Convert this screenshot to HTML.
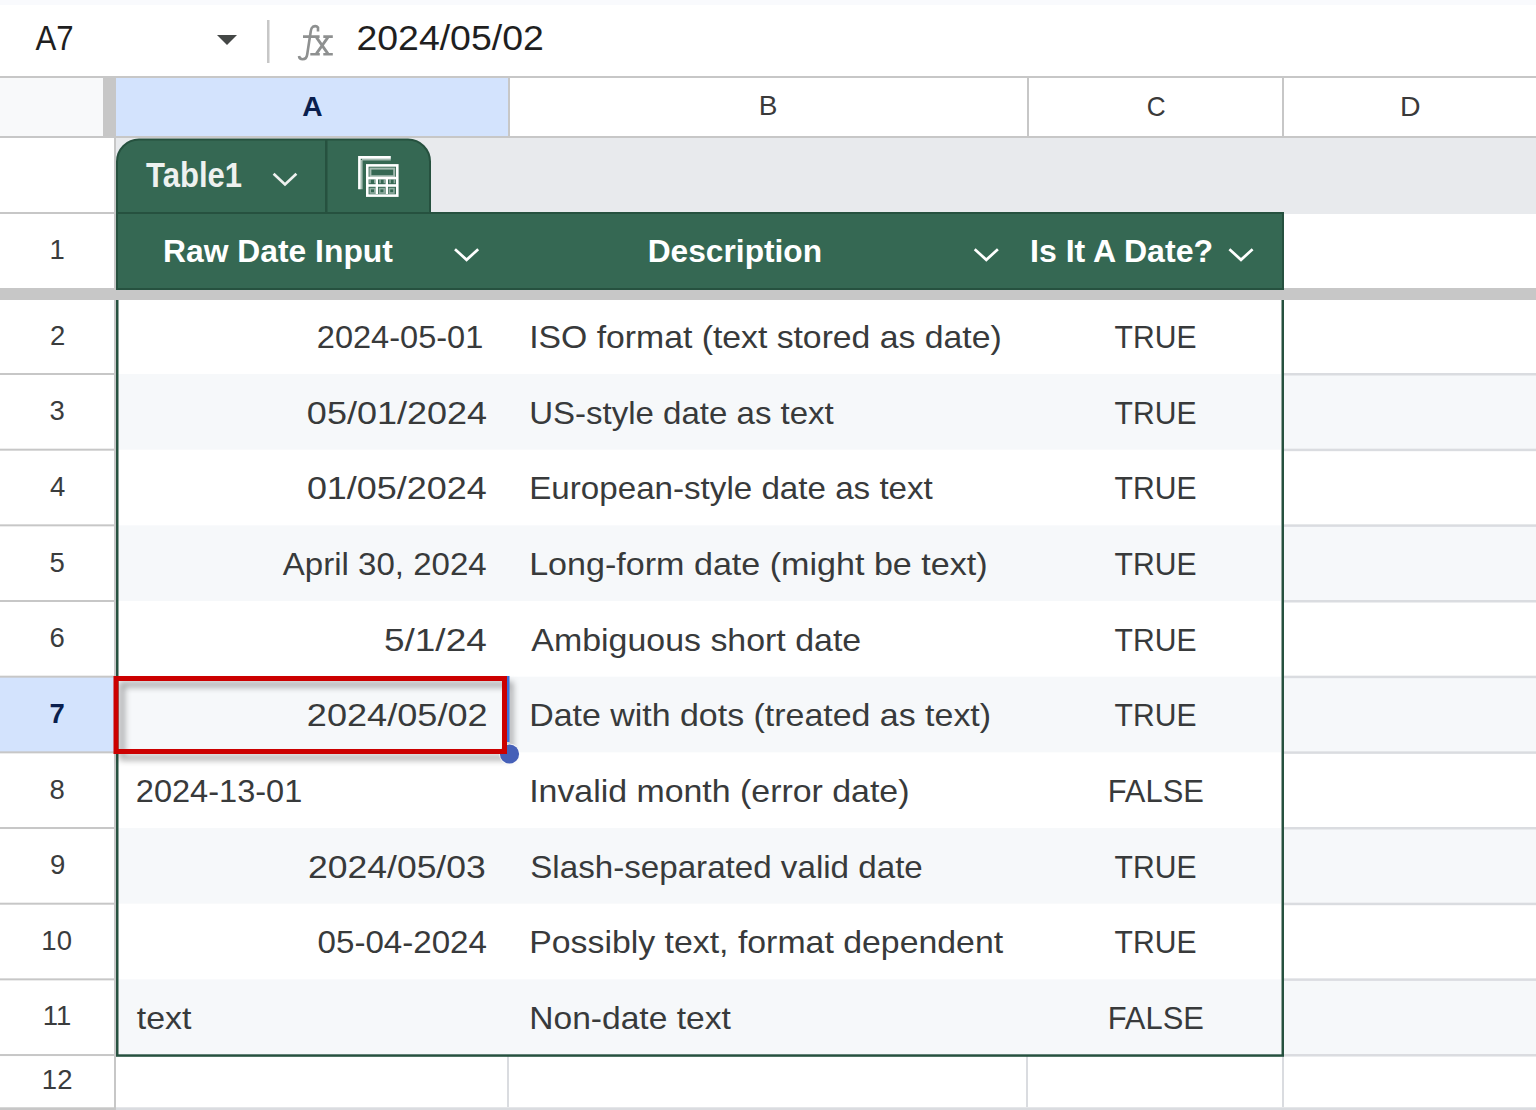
<!DOCTYPE html>
<html><head><meta charset="utf-8"><style>
html,body{margin:0;padding:0;background:#fff;width:1536px;height:1110px;overflow:hidden}
svg{display:block;font-family:"Liberation Sans",sans-serif}
</style></head><body>
<svg width="1536" height="1110" viewBox="0 0 1536 1110">
<rect x="0" y="0" width="1536" height="5" fill="#f9fafd" />
<rect x="0" y="76" width="1536" height="2" fill="#c7c7c7" />
<path d="M217 35 L237 35 L227 45 Z" fill="#444746"/>
<rect x="267" y="20" width="2.5" height="43" fill="#c7c7c7" />
<g fill="none" stroke="#8e9090" stroke-width="2.6"><path d="M318 31.5 V27.6 C317 26.2 314.6 26 312.8 26.8 C311.4 27.6 311 29.5 310.8 31 L307.2 54.5 C306.8 57.6 305.4 59.2 302.6 59.2 C300.6 59.2 299.2 58 299 56"/><path d="M303 36.6 H319.6 M323.3 36.6 H332.8 M310.3 54.3 H319.8 M323.3 54.3 H332.8"/><path d="M316.5 37.5 L327.8 53.5 M327.8 37.5 L316.5 53.5" stroke-width="3"/></g>
<rect x="0" y="78" width="103" height="58" fill="#f8f9fa" />
<rect x="103" y="78" width="13" height="58" fill="#c7c7c7" />
<rect x="116" y="78" width="392" height="58" fill="#d3e3fd" />
<rect x="508" y="78" width="1028" height="58" fill="#ffffff" />
<rect x="508" y="78" width="2" height="58" fill="#c7c7c7" />
<rect x="1027" y="78" width="2" height="58" fill="#c7c7c7" />
<rect x="1282" y="78" width="2" height="58" fill="#c7c7c7" />
<rect x="0" y="136" width="1536" height="2" fill="#c7c7c7" />
<rect x="114" y="138" width="2" height="972" fill="#c7c7c7" />
<rect x="116" y="138" width="1420" height="76" fill="#e8eaed" />
<path d="M117 213 V161.5 A22 22 0 0 1 139 139.5 H408 A22 22 0 0 1 430 161.5 V213 Z" fill="#356853" stroke="#26513f" stroke-width="2"/>
<rect x="325" y="139" width="2.5" height="73" fill="#26513f" />
<path d="M273.6 173.8 L285 184.4 L296.4 173.8" fill="none" stroke="#eef1ef" stroke-width="2.7"/>
<g fill="none" stroke="#ffffff" stroke-width="2.6"><path d="M359.4 189.2 V157.4 H390.8"/><rect x="367.3" y="165.4" width="30" height="30.2"/></g>
<g fill="none" stroke="#ffffff" stroke-opacity="0.55" stroke-width="2"><path d="M362 159.6 H390.8 M361.6 160 V189.2"/><rect x="370.4" y="168.6" width="23.8" height="7.6"/></g>
<g fill="#ffffff"><rect x="368" y="176.8" width="29" height="2.6" fill="#ffffff" /><rect x="368" y="184.2" width="29" height="2.6" fill="#ffffff" /><rect x="375.6" y="177" width="2.4" height="17" fill="#ffffff" /><rect x="385.6" y="177" width="2.4" height="17" fill="#ffffff" /></g>
<g fill="none" stroke="#ffffff" stroke-opacity="0.45" stroke-width="1.6"><rect x="370.2" y="188.6" width="4.6" height="4.4"/><rect x="379.6" y="188.6" width="4.6" height="4.4"/><rect x="389.4" y="188.6" width="4.6" height="4.4"/><path d="M370 179.4 V183.2 M374.8 179.4 V183.2 M380 179.4 V183.2 M384.4 179.4 V183.2 M390 179.4 V183.2 M394.4 179.4 V183.2"/></g>
<rect x="0" y="212" width="114" height="2" fill="#c7c7c7" />
<rect x="0" y="288" width="1536" height="12" fill="#c7c7c7" />
<rect x="116" y="212" width="1168" height="78" fill="#356853" />
<rect x="117" y="213" width="1166" height="76" fill="none" stroke="#26513f" stroke-width="2"/>
<path d="M455.0 249.2 L466.6 259.8 L478.20000000000005 249.2" fill="none" stroke="#ffffff" stroke-width="2.7"/>
<path d="M974.6999999999999 249.2 L986.3 259.8 L997.9 249.2" fill="none" stroke="#ffffff" stroke-width="2.7"/>
<path d="M1229.4 249.2 L1241 259.8 L1252.6 249.2" fill="none" stroke="#ffffff" stroke-width="2.7"/>
<rect x="118" y="374.00" width="1163" height="75.67" fill="#f6f8fa" />
<rect x="1284" y="374.00" width="252" height="75.67" fill="#f6f8fa" />
<rect x="118" y="525.34" width="1163" height="75.67" fill="#f6f8fa" />
<rect x="1284" y="525.34" width="252" height="75.67" fill="#f6f8fa" />
<rect x="118" y="676.68" width="1163" height="75.67" fill="#f6f8fa" />
<rect x="1284" y="676.68" width="252" height="75.67" fill="#f6f8fa" />
<rect x="118" y="828.02" width="1163" height="75.67" fill="#f6f8fa" />
<rect x="1284" y="828.02" width="252" height="75.67" fill="#f6f8fa" />
<rect x="118" y="979.36" width="1163" height="75.67" fill="#f6f8fa" />
<rect x="1284" y="979.36" width="252" height="75.67" fill="#f6f8fa" />
<rect x="0" y="676" width="114" height="77" fill="#d3e3fd" />
<rect x="0" y="373.00" width="114" height="2" fill="#c7c7c7" />
<rect x="1284" y="373.00" width="252" height="2.5" fill="#dadce0" />
<rect x="0" y="448.67" width="114" height="2" fill="#c7c7c7" />
<rect x="1284" y="448.67" width="252" height="2.5" fill="#dadce0" />
<rect x="0" y="524.34" width="114" height="2" fill="#c7c7c7" />
<rect x="1284" y="524.34" width="252" height="2.5" fill="#dadce0" />
<rect x="0" y="600.01" width="114" height="2" fill="#c7c7c7" />
<rect x="1284" y="600.01" width="252" height="2.5" fill="#dadce0" />
<rect x="0" y="675.68" width="114" height="2" fill="#c7c7c7" />
<rect x="1284" y="675.68" width="252" height="2.5" fill="#dadce0" />
<rect x="0" y="751.35" width="114" height="2" fill="#c7c7c7" />
<rect x="1284" y="751.35" width="252" height="2.5" fill="#dadce0" />
<rect x="0" y="827.02" width="114" height="2" fill="#c7c7c7" />
<rect x="1284" y="827.02" width="252" height="2.5" fill="#dadce0" />
<rect x="0" y="902.69" width="114" height="2" fill="#c7c7c7" />
<rect x="1284" y="902.69" width="252" height="2.5" fill="#dadce0" />
<rect x="0" y="978.36" width="114" height="2" fill="#c7c7c7" />
<rect x="1284" y="978.36" width="252" height="2.5" fill="#dadce0" />
<rect x="0" y="1054.03" width="114" height="2" fill="#c7c7c7" />
<rect x="1284" y="1054.03" width="252" height="2.5" fill="#dadce0" />
<rect x="116" y="1107.3" width="1420" height="2.7" fill="#dadce0" />
<rect x="0" y="1107.3" width="114" height="2.7" fill="#c7c7c7" />
<rect x="507" y="1056" width="2" height="51" fill="#dadce0" />
<rect x="1026" y="1056" width="2" height="51" fill="#dadce0" />
<rect x="1282" y="1056" width="2" height="51" fill="#dadce0" />
<rect x="116" y="300" width="2.5" height="756" fill="#26513f" />
<rect x="1281.5" y="300" width="2.5" height="756" fill="#26513f" />
<rect x="116" y="1054.3" width="1168" height="2.5" fill="#26513f" />
<defs><filter id="sh" x="-20%" y="-50%" width="140%" height="200%"><feGaussianBlur stdDeviation="3.2"/></filter></defs>
<rect x="122" y="684.5" width="388.5" height="73" fill="none" stroke="#000" stroke-opacity="0.36" stroke-width="5" filter="url(#sh)"/>
<rect x="507" y="676" width="2.5" height="66" fill="#3b6fd8" />
<circle cx="509.5" cy="754" r="10.5" fill="#ffffff" fill-opacity="0.7"/>
<circle cx="509.5" cy="754" r="9.6" fill="#4660b8"/>
<rect x="116" y="678.5" width="388.5" height="73" fill="none" stroke="#cc0000" stroke-width="5"/>
<text transform="translate(35.40,50.30) scale(0.8672,1)" font-size="36" font-weight="normal" fill="#1f1f1f">A7</text>
<text transform="translate(356.45,49.50) scale(1.0547,1)" font-size="35.5" font-weight="normal" fill="#1f1f1f">2024/05/02</text>
<text transform="translate(302.20,115.80) scale(0.9900,1)" font-size="28.5" font-weight="bold" fill="#0a1f4e">A</text>
<text transform="translate(758.66,115.20) scale(1.0200,1)" font-size="27.5" font-weight="normal" fill="#3a3a3a">B</text>
<text transform="translate(1146.85,115.80) scale(0.9500,1)" font-size="27.5" font-weight="normal" fill="#3a3a3a">C</text>
<text transform="translate(1399.93,115.70) scale(1.0353,1)" font-size="27.5" font-weight="normal" fill="#3a3a3a">D</text>
<text transform="translate(146.10,186.90) scale(0.8867,1)" font-size="35" font-weight="bold" fill="#eef1ef">Table1</text>
<text transform="translate(163.01,262.00) scale(0.9949,1)" font-size="32" font-weight="bold" fill="#ffffff">Raw Date Input</text>
<text transform="translate(647.72,262.00) scale(0.9908,1)" font-size="32" font-weight="bold" fill="#ffffff">Description</text>
<text transform="translate(1029.99,262.00) scale(1.0034,1)" font-size="32" font-weight="bold" fill="#ffffff">Is It A Date?</text>
<text transform="translate(316.78,348.20) scale(1.0180,1)" font-size="32" font-weight="normal" fill="#383a3b">2024-05-01</text>
<text transform="translate(529.19,348.20) scale(1.0544,1)" font-size="32" font-weight="normal" fill="#383a3b">ISO format (text stored as date)</text>
<text transform="translate(1114.60,348.20) scale(0.9409,1)" font-size="32" font-weight="normal" fill="#383a3b">TRUE</text>
<text transform="translate(306.87,423.84) scale(1.1256,1)" font-size="32" font-weight="normal" fill="#383a3b">05/01/2024</text>
<text transform="translate(529.24,423.84) scale(1.0319,1)" font-size="32" font-weight="normal" fill="#383a3b">US-style date as text</text>
<text transform="translate(1114.60,423.84) scale(0.9409,1)" font-size="32" font-weight="normal" fill="#383a3b">TRUE</text>
<text transform="translate(306.88,499.48) scale(1.1234,1)" font-size="32" font-weight="normal" fill="#383a3b">01/05/2024</text>
<text transform="translate(529.23,499.48) scale(1.0362,1)" font-size="32" font-weight="normal" fill="#383a3b">European-style date as text</text>
<text transform="translate(1114.60,499.48) scale(0.9409,1)" font-size="32" font-weight="normal" fill="#383a3b">TRUE</text>
<text transform="translate(282.80,575.12) scale(1.0327,1)" font-size="32" font-weight="normal" fill="#383a3b">April 30, 2024</text>
<text transform="translate(529.17,575.12) scale(1.0655,1)" font-size="32" font-weight="normal" fill="#383a3b">Long-form date (might be text)</text>
<text transform="translate(1114.60,575.12) scale(0.9409,1)" font-size="32" font-weight="normal" fill="#383a3b">TRUE</text>
<text transform="translate(383.94,650.76) scale(1.1563,1)" font-size="32" font-weight="normal" fill="#383a3b">5/1/24</text>
<text transform="translate(531.30,650.76) scale(1.0599,1)" font-size="32" font-weight="normal" fill="#383a3b">Ambiguous short date</text>
<text transform="translate(1114.60,650.76) scale(0.9409,1)" font-size="32" font-weight="normal" fill="#383a3b">TRUE</text>
<text transform="translate(306.87,726.40) scale(1.1291,1)" font-size="32" font-weight="normal" fill="#383a3b">2024/05/02</text>
<text transform="translate(529.18,726.40) scale(1.0604,1)" font-size="32" font-weight="normal" fill="#383a3b">Date with dots (treated as text)</text>
<text transform="translate(1114.60,726.40) scale(0.9409,1)" font-size="32" font-weight="normal" fill="#383a3b">TRUE</text>
<text transform="translate(135.78,802.04) scale(1.0180,1)" font-size="32" font-weight="normal" fill="#383a3b">2024-13-01</text>
<text transform="translate(529.18,802.04) scale(1.0590,1)" font-size="32" font-weight="normal" fill="#383a3b">Invalid month (error date)</text>
<text transform="translate(1107.67,802.04) scale(0.9661,1)" font-size="32" font-weight="normal" fill="#383a3b">FALSE</text>
<text transform="translate(308.09,877.68) scale(1.1095,1)" font-size="32" font-weight="normal" fill="#383a3b">2024/05/03</text>
<text transform="translate(530.26,877.68) scale(1.0360,1)" font-size="32" font-weight="normal" fill="#383a3b">Slash-separated valid date</text>
<text transform="translate(1114.60,877.68) scale(0.9409,1)" font-size="32" font-weight="normal" fill="#383a3b">TRUE</text>
<text transform="translate(317.56,953.32) scale(1.0353,1)" font-size="32" font-weight="normal" fill="#383a3b">05-04-2024</text>
<text transform="translate(529.18,953.32) scale(1.0579,1)" font-size="32" font-weight="normal" fill="#383a3b">Possibly text, format dependent</text>
<text transform="translate(1114.60,953.32) scale(0.9409,1)" font-size="32" font-weight="normal" fill="#383a3b">TRUE</text>
<text transform="translate(136.80,1028.96) scale(1.0602,1)" font-size="32" font-weight="normal" fill="#383a3b">text</text>
<text transform="translate(529.20,1028.96) scale(1.0498,1)" font-size="32" font-weight="normal" fill="#383a3b">Non-date text</text>
<text transform="translate(1107.67,1028.96) scale(0.9661,1)" font-size="32" font-weight="normal" fill="#383a3b">FALSE</text>
<text transform="translate(49.50,259.30)" font-size="27.5" font-weight="normal" fill="#3a3c3d">1</text>
<text transform="translate(50.00,344.70)" font-size="27.5" font-weight="normal" fill="#3a3c3d">2</text>
<text transform="translate(49.50,420.34)" font-size="27.5" font-weight="normal" fill="#3a3c3d">3</text>
<text transform="translate(50.00,495.98)" font-size="27.5" font-weight="normal" fill="#3a3c3d">4</text>
<text transform="translate(49.50,571.62)" font-size="27.5" font-weight="normal" fill="#3a3c3d">5</text>
<text transform="translate(49.50,647.26)" font-size="27.5" font-weight="normal" fill="#3a3c3d">6</text>
<text transform="translate(49.50,722.90)" font-size="27.5" font-weight="bold" fill="#0a1f4e">7</text>
<text transform="translate(49.50,798.54)" font-size="27.5" font-weight="normal" fill="#3a3c3d">8</text>
<text transform="translate(50.00,874.18)" font-size="27.5" font-weight="normal" fill="#3a3c3d">9</text>
<text transform="translate(41.35,949.82)" font-size="27.5" font-weight="normal" fill="#3a3c3d">10</text>
<text transform="translate(42.87,1025.46)" font-size="27.5" font-weight="normal" fill="#3a3c3d">11</text>
<text transform="translate(41.85,1088.70)" font-size="27.5" font-weight="normal" fill="#3a3c3d">12</text>
</svg>
</body></html>
